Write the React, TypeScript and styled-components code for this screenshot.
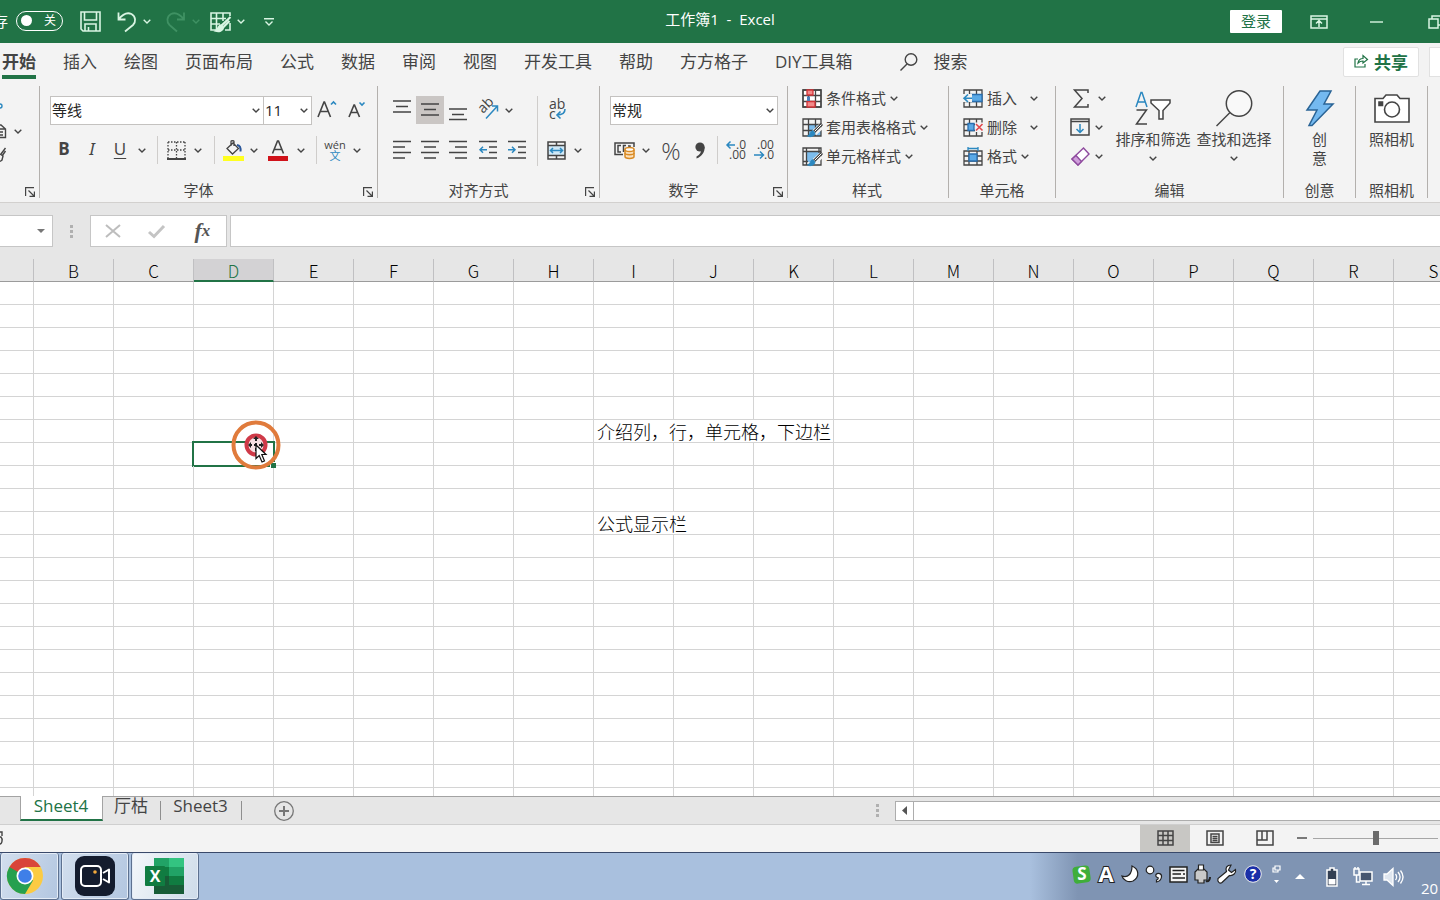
import React from "react";
import styled, { createGlobalStyle } from "styled-components";

const GlobalStyle = createGlobalStyle`
  *, *::before, *::after { box-sizing: border-box; }
  body {
    margin: 0;
    overflow: hidden;
    font-family: "Open Sans", "Noto Sans CJK SC", sans-serif;
    font-size: 15px;
    color: #444;
  }
  button, input, select { font: inherit; color: inherit; }
`;

const green = "#217346";
const ink = "#444";
const blue = "#2b88c0";

const Window = styled.div`
  display: flex;
  flex-direction: column;
  height: 100vh;
  overflow: hidden;
  background: #fff;
`;

/* ---------- shared pieces ---------- */

const BareButton = styled.button`
  display: flex;
  align-items: center;
  justify-content: center;
  flex: none;
  padding: 0;
  border: 0;
  background: none;
`;

const Svg = styled.svg`
  display: block;
  flex: none;
  overflow: visible;
`;

type IconProps = { w: number; h: number; children: React.ReactNode; stroke?: string; sw?: number };
const Icon = ({ w, h, children, stroke = ink, sw = 1.4 }: IconProps) => (
  <Svg width={w} height={h} viewBox={`0 0 ${w} ${h}`} fill="none" stroke={stroke} strokeWidth={sw} aria-hidden="true">
    {children}
  </Svg>
);

const Chevron = ({ color = ink }: { color?: string }) => (
  <Icon w={8} h={5} stroke={color}>
    <path d="M0.7 0.7 4 4 7.3 0.7" />
  </Icon>
);

/* ---------- title bar ---------- */

const TitleBar = styled.header`
  display: grid;
  grid-template-columns: 1fr auto 1fr;
  align-items: center;
  flex: none;
  height: 43px;
  background: ${green};
  color: #fff;
`;

const QuickAccess = styled.div`
  display: flex;
  align-items: center;
`;

const AutoSave = styled.label`
  display: flex;
  justify-content: flex-end;
  width: 8px;
  margin-right: 8px;
  padding-bottom: 2px;
  overflow: hidden;
  line-height: 20px;
`;

const Toggle = styled.button`
  display: flex;
  align-items: center;
  justify-content: space-between;
  width: 47px;
  height: 20px;
  padding: 0 6px 0 4px;
  margin: 0 17px 2px 0;
  border: 1px solid #fff;
  border-radius: 10px;
  background: none;
  font-size: 12px;
  line-height: 16px;
  &::before {
    content: "";
    width: 11px;
    height: 11px;
    border-radius: 50%;
    background: #fff;
  }
`;

const QuickButton = styled(BareButton)<{ $w: number; $gap?: number }>`
  width: ${(p) => p.$w}px;
  height: 28px;
  margin-left: ${(p) => p.$gap || 0}px;
`;

const DocTitle = styled.h1`
  margin: 0;
  padding-bottom: 6px;
  font-size: 15px;
  font-weight: 400;
  white-space: pre;
`;

const WindowActions = styled.div`
  display: flex;
  align-items: center;
  justify-content: flex-end;
`;

const SignIn = styled.button`
  width: 52px;
  height: 23px;
  margin-right: 28px;
  padding: 0 0 2px;
  border: 0;
  border-radius: 1px;
  background: #fff;
  color: ${green};
  font-size: 15px;
  line-height: 20px;
`;

const WindowButton = styled(BareButton)<{ $w: number; $gap?: number }>`
  justify-content: flex-start;
  width: ${(p) => p.$w}px;
  height: 22px;
  margin-right: ${(p) => p.$gap || 0}px;
  overflow: hidden;
`;

const mint = "#d9f5e3";
const faded = "#3f9163";

const TitleArea = () => (
  <TitleBar>
    <QuickAccess>
      <AutoSave htmlFor="autosave">存</AutoSave>
      <Toggle id="autosave" type="button">关</Toggle>
      <QuickButton $w={21} aria-label="保存">
        <Icon w={21} h={21} stroke={mint} sw={1.6}>
          <path d="M1 1H20V20H3L1 18Z" />
          <path d="M4.500 1V9H16.500V1M5 20V13H16V20M8.500 20V16" />
        </Icon>
      </QuickButton>
      <QuickButton $w={20} $gap={16} aria-label="撤消">
        <Icon w={20} h={20} stroke={mint} sw={1.8}>
          <path d="M1.500 0.500V7.500H8.500M1.500 7.500C5 3 10 0 14.500 2C19 4.500 19 10 16 13L8 19.500" />
        </Icon>
      </QuickButton>
      <QuickButton $w={8} $gap={6} aria-label="撤消选项"><Chevron color={mint} /></QuickButton>
      <QuickButton $w={20} $gap={15} aria-label="恢复">
        <Icon w={20} h={20} stroke={faded} sw={1.8}>
          <path d="M18 0.500V7.500H11M18 7.500C14.500 3 9.500 0 5 2C0.500 4.500 0.500 10 3.500 13L11 19.500" />
        </Icon>
      </QuickButton>
      <QuickButton $w={8} $gap={6} aria-label="恢复选项"><Chevron color={faded} /></QuickButton>
      <QuickButton $w={21} $gap={10} aria-label="套用格式">
        <Icon w={21} h={20} stroke={mint} sw={1.6}>
          <path d="M7 18H1V1H20V4M1 6.500H16M1 12H10M6.500 1V18M13 1V9M20 11V18H15" />
          <path d="M20.500 5 11 14M19.500 9 13.500 15" strokeWidth={2.2} />
          <path d="M11 13C8 13 9 17 5.500 19C9 20 13 19 13.500 15.500Z" fill={mint} />
        </Icon>
      </QuickButton>
      <QuickButton $w={8} $gap={6} aria-label="格式选项"><Chevron color={mint} /></QuickButton>
      <QuickButton $w={10} $gap={19} aria-label="自定义快速访问工具栏">
        <Icon w={10} h={8} stroke={mint}>
          <path d="M0 0.700H10M1.500 3.500 5 7 8.500 3.500" />
        </Icon>
      </QuickButton>
    </QuickAccess>
    <DocTitle>工作簿1  -  Excel</DocTitle>
    <WindowActions>
      <SignIn type="button">登录</SignIn>
      <WindowButton $w={18} $gap={42} aria-label="功能区显示选项">
        <Icon w={18} h={14} stroke={mint} sw={1.5}>
          <path d="M1 1H17V13H1ZM1 4H17M9 12V6M6 8.500 9 5.500 12 8.500" />
        </Icon>
      </WindowButton>
      <WindowButton $w={14} $gap={44} aria-label="最小化">
        <Icon w={14} h={2} stroke={mint}><path d="M0 1H13" /></Icon>
      </WindowButton>
      <WindowButton $w={12} aria-label="还原">
        <Icon w={14} h={14} stroke={mint} sw={1.5}>
          <path d="M1 4H10V13H1ZM4 4V1H13V10H10" />
        </Icon>
      </WindowButton>
    </WindowActions>
  </TitleBar>
);

/* ---------- ribbon tabs ---------- */

const TabBar = styled.nav`
  display: flex;
  align-items: center;
  flex: none;
  gap: 27px;
  height: 40px;
  padding-left: 2px;
  background: #f3f3f3;
  font-size: 17px;
  overflow: hidden;
`;

const Tab = styled.button<{ $active?: boolean }>`
  flex: none;
  height: 33px;
  margin-bottom: 2px;
  padding: 4px 0 0;
  border: 0;
  border-bottom: 4px solid ${(p) => (p.$active ? green : "transparent")};
  background: none;
  font-weight: ${(p) => (p.$active ? 700 : 400)};
  line-height: 24px;
`;

const SearchBox = styled.button`
  display: flex;
  align-items: center;
  gap: 16px;
  margin-left: 20px;
  padding: 0 0 3px;
  border: 0;
  background: none;
  line-height: 24px;
`;

const TabActions = styled.div`
  display: flex;
  gap: 10px;
  margin: 0 0 2px auto;
`;

const Share = styled.button`
  display: flex;
  align-items: center;
  justify-content: center;
  gap: 6px;
  width: 76px;
  height: 30px;
  padding: 0 0 2px;
  border: 1px solid #e1e1e1;
  border-radius: 2px;
  background: #fff;
  color: ${green};
  font-weight: 700;
`;

const Comments = styled.button`
  width: 11px;
  height: 30px;
  padding: 0;
  border: 1px solid #e1e1e1;
  border-right: 0;
  background: #fff;
`;

const tabs = ["插入", "绘图", "页面布局", "公式", "数据", "审阅", "视图", "开发工具", "帮助", "方方格子", "DIY工具箱"];

const Tabs = () => (
  <TabBar>
    <Tab $active>开始</Tab>
    {tabs.map((t) => <Tab key={t}>{t}</Tab>)}
    <SearchBox type="button">
      <Icon w={18} h={18}>
        <circle cx="11" cy="6.500" r="5.800" />
        <path d="M7 11 0.500 17.500" />
      </Icon>
      搜索
    </SearchBox>
    <TabActions>
      <Share type="button">
        <Icon w={14} h={14} stroke={green} sw={1.2}>
          <path d="M4 5H1V13H11V10M4 9C4.500 6 6 4.500 9 4.500V1.500L13.500 5.500 9 9V7C7 7 5.500 7.500 4 9Z" />
        </Icon>
        共享
      </Share>
      <Comments type="button" aria-label="批注" />
    </TabActions>
  </TabBar>
);

/* ---------- ribbon ---------- */

const RibbonBar = styled.section`
  display: flex;
  flex: none;
  height: 120px;
  padding: 3px 0 4px;
  border-bottom: 1px solid #d2d0ce;
  background: #f3f3f3;
  overflow: hidden;
`;

const Group = styled.div<{ $w: number }>`
  position: relative;
  display: flex;
  flex-direction: column;
  flex: none;
  width: ${(p) => p.$w}px;
  border-right: 1px solid #b3b0ad;
`;

const GroupBody = styled.div<{ $x?: number; $y?: number; $center?: boolean }>`
  display: flex;
  justify-content: ${(p) => (p.$center ? "center" : "flex-start")};
  padding: ${(p) => p.$y || 0}px 0 0 ${(p) => p.$x || 0}px;
`;

const GroupLabel = styled.div<{ $shift?: number }>`
  margin-top: auto;
  padding-right: ${(p) => p.$shift || 0}px;
  height: 16px;
  line-height: 16px;
  text-align: center;
`;

const LauncherButton = styled(BareButton)`
  position: absolute;
  right: 4px;
  bottom: 0;
  width: 10px;
  height: 12px;
`;

const Launcher = () => (
  <LauncherButton aria-label="更多选项">
    <Icon w={10} h={10} sw={1.2}>
      <path d="M0.600 9V0.600H9M3.500 3.500 9 9M9.400 4.500V9.400H4.500" />
    </Icon>
  </LauncherButton>
);

const Stack = styled.div<{ $gap: number }>`
  display: flex;
  flex-direction: column;
  gap: ${(p) => p.$gap}px;
`;

const Row = styled.div<{ $h?: number }>`
  display: flex;
  align-items: center;
  height: ${(p) => p.$h || 28}px;
`;

const Tool = styled(BareButton)<{ $w: number; $active?: boolean }>`
  width: ${(p) => p.$w}px;
  height: 28px;
  background: ${(p) => (p.$active ? "#cac6c4" : "none")};
`;

const LetterTool = styled(Tool)<{ $bold?: boolean; $italic?: boolean; $under?: boolean }>`
  padding-bottom: 3px;
  font-family: ${(p) => (p.$italic ? '"Noto Sans", serif' : "inherit")};
  font-size: 17px;
  font-weight: ${(p) => (p.$bold ? 700 : 400)};
  font-style: ${(p) => (p.$italic ? "italic" : "normal")};
  text-decoration: ${(p) => (p.$under ? "underline" : "none")};
  text-underline-offset: 3px;
`;

const Divider = styled.div<{ $w: number; $h?: number }>`
  flex: none;
  width: ${(p) => p.$w}px;
  height: ${(p) => p.$h || 28}px;
  background: linear-gradient(#cfcdcb, #cfcdcb) center / 1px 100% no-repeat;
`;

const PickerBox = styled.div<{ $w: number }>`
  position: relative;
  flex: none;
  width: ${(p) => p.$w}px;
  margin-right: -1px;
`;

const PickerSelect = styled.select`
  display: block;
  width: 100%;
  height: 29px;
  padding: 0 18px 0 1px;
  border: 1px solid #c4c2c0;
  border-radius: 0;
  background: #fff;
  color: #262626;
  appearance: none;
`;

const PickerArrow = styled.span`
  position: absolute;
  top: 12px;
  right: 4px;
  pointer-events: none;
`;

const Picker = ({ value, label, w }: { value: string; label: string; w: number }) => (
  <PickerBox $w={w}>
    <PickerSelect aria-label={label} defaultValue={value}>
      <option>{value}</option>
    </PickerSelect>
    <PickerArrow><Chevron /></PickerArrow>
  </PickerBox>
);

const Drop = ({ w, label }: { w: number; label: string }) => (
  <Tool $w={w} aria-label={label}><Chevron /></Tool>
);

const ClipGroup = () => (
  <Group $w={40}>
    <GroupBody $y={9}>
      <Stack $gap={0}>
        <Row $h={24}>
          <Icon w={3} h={8} stroke={blue}><circle cx="0" cy="3" r="2" /></Icon>
        </Row>
        <Row $h={24}>
          <Icon w={6} h={16}><path d="M0 2H1L5.500 6V14.500H0M0 6H5M0 9H3M0 12H3" /></Icon>
          <Drop w={24} label="复制选项" />
        </Row>
        <Row $h={24}>
          <Icon w={6} h={16}><path d="M5.500 1 1 7M5.500 4 2 9M0 7 3 9 2 13 0 14.500" /></Icon>
        </Row>
      </Stack>
    </GroupBody>
    <Launcher />
  </Group>
);

const Pinyin = styled.span`
  display: flex;
  flex-direction: column;
  align-items: center;
  font-size: 11px;
  line-height: 11px;
  span { color: ${blue}; }
`;

const FontGroup = () => (
  <Group $w={338}>
    <GroupBody $x={10} $y={10}>
      <Stack $gap={12}>
        <Row>
          <Picker value="等线" label="字体" w={214} />
          <Picker value="11" label="字号" w={49} />
          <Tool $w={32} aria-label="增大字号">
            <Icon w={20} h={20} sw={1.6}>
              <path d="M1 17 7 2H7.500L13.500 17M3 11.500H11.500" />
              <path d="M14 4.500 16.500 2 19 4.500" stroke={blue} />
            </Icon>
          </Tool>
          <Tool $w={28} aria-label="减小字号">
            <Icon w={18} h={18} sw={1.6}>
              <path d="M1 16 6 4H6.500L11.500 16M3 11.500H9.500" />
              <path d="M11.500 1.500 14 4 16.500 1.500" stroke={blue} />
            </Icon>
          </Tool>
        </Row>
        <Row>
          <LetterTool $w={28} $bold>B</LetterTool>
          <LetterTool $w={28} $italic>I</LetterTool>
          <LetterTool $w={28} $under>U</LetterTool>
          <Drop w={16} label="下划线选项" />
          <Divider $w={15} />
          <Tool $w={22} aria-label="边框">
            <Icon w={19} h={19} sw={1.3}>
              <path d="M1 1H18M1 1V17M18 1V17M9.500 1V17M1 9H18" strokeDasharray="1.500 1.500" />
              <path d="M0 18H19" strokeWidth={2} />
            </Icon>
          </Tool>
          <Drop w={22} label="边框选项" />
          <Divider $w={10} />
          <Tool $w={28} aria-label="填充颜色">
            <Icon w={21} h={21} sw={1.3}>
              <path d="M4 8.500 10 3 15.500 8.500 9.500 14ZM8 6V1.500C8 0.500 11 0.500 11 1.500V6" />
              <path d="M14 5C17 5.500 18 7.500 17.500 11.500" stroke="#2b579a" strokeWidth={2} />
              <path d="M0 18.500H21" stroke="#ffff20" strokeWidth={5} />
            </Icon>
          </Tool>
          <Drop w={14} label="填充选项" />
          <Tool $w={34} aria-label="字体颜色">
            <Icon w={20} h={21} sw={1.6}>
              <path d="M4.500 13.500 9.500 1H10.500L15.500 13.500M6.500 9.500H13.500" />
              <path d="M0 18.500H20" stroke="#d0121a" strokeWidth={5} />
            </Icon>
          </Tool>
          <Drop w={12} label="字体颜色选项" />
          <Divider $w={18} />
          <Tool $w={20} aria-label="拼音">
            <Pinyin>wén<span>文</span></Pinyin>
          </Tool>
          <Drop w={24} label="拼音选项" />
        </Row>
      </Stack>
    </GroupBody>
    <GroupLabel $shift={20}>字体</GroupLabel>
    <Launcher />
  </Group>
);

const Lines = ({ d }: { d: string }) => <Icon w={18} h={20} sw={1.5}><path d={d} /></Icon>;

const IconText = styled.text<{ $size: number }>`
  font-size: ${(p) => p.$size}px;
  fill: ${ink};
  stroke: none;
`;

const AlignGroup = () => (
  <Group $w={222}>
    <GroupBody $x={10} $y={10}>
      <Stack $gap={12}>
        <Row>
          <Tool $w={28} aria-label="顶端对齐"><Lines d="M0 1H18M3 6.500H15M0 12H18" /></Tool>
          <Tool $w={28} $active aria-label="垂直居中"><Lines d="M0 4H18M3 9.500H15M0 15H18" /></Tool>
          <Tool $w={28} aria-label="底端对齐"><Lines d="M0 9H18M3 14.500H15M0 19.500H18" /></Tool>
          <Tool $w={32} aria-label="方向">
            <Icon w={20} h={20} stroke={blue} sw={1.5}>
              <IconText $size={14} transform="translate(5 14) rotate(-45)">ab</IconText>
              <path d="M8 18.500 19.500 6M14 6H19.500V11.500" />
            </Icon>
          </Tool>
          <Drop w={10} label="方向选项" />
        </Row>
        <Row>
          <Tool $w={28} aria-label="左对齐"><Lines d="M0 1.500H18M0 7H12M0 12.500H18M0 18H12" /></Tool>
          <Tool $w={28} aria-label="居中"><Lines d="M0 1.500H18M3 7H15M0 12.500H18M3 18H15" /></Tool>
          <Tool $w={28} aria-label="右对齐"><Lines d="M0 1.500H18M6 7H18M0 12.500H18M6 18H18" /></Tool>
          <Tool $w={32} aria-label="减少缩进">
            <Icon w={18} h={20} sw={1.5}>
              <path d="M0 1.500H18M10 7H18M10 12.500H18M0 18H18" />
              <path d="M8 9.800H1M4 6.800 1 9.800 4 12.800" stroke={blue} />
            </Icon>
          </Tool>
          <Tool $w={26} aria-label="增加缩进">
            <Icon w={18} h={20} sw={1.5}>
              <path d="M0 1.500H18M10 7H18M10 12.500H18M0 18H18" />
              <path d="M0 9.800H7M4 6.800 7 9.800 4 12.800" stroke={blue} />
            </Icon>
          </Tool>
        </Row>
      </Stack>
      <Divider $w={14} $h={70} />
      <Stack $gap={12}>
        <Row>
          <Tool $w={26} aria-label="自动换行">
            <Icon w={18} h={20} stroke={blue} sw={1.6}>
              <IconText $size={14} x="1" y="9">ab</IconText>
              <IconText $size={14} x="1" y="19">c</IconText>
              <path d="M17 9C17 13 15 15 9 15M12.500 11.500 9 15 12.500 18.500" />
            </Icon>
          </Tool>
        </Row>
        <Row>
          <Tool $w={24} aria-label="合并后居中">
            <Icon w={19} h={19} sw={1.5}>
              <path d="M1 4.500H18V14.500H1Z" stroke="none" fill="#cfe8f7" />
              <path d="M1 1H18V18H1ZM1 4.500H18M1 14.500H18M9.500 1V4.500M9.500 14.500V18" />
              <path d="M3.500 9.500H15.500M6 7 3.500 9.500 6 12M13 7 15.500 9.500 13 12" stroke={blue} />
            </Icon>
          </Tool>
          <Drop w={20} label="合并选项" />
        </Row>
      </Stack>
    </GroupBody>
    <GroupLabel $shift={20}>对齐方式</GroupLabel>
    <Launcher />
  </Group>
);

const Percent = styled(Tool)`
  font-size: 24px;
  font-weight: 300;
`;

const NumberGroup = () => (
  <Group $w={188}>
    <GroupBody $x={10} $y={10}>
      <Stack $gap={12}>
        <Row><Picker value="常规" label="数字格式" w={168} /></Row>
        <Row>
          <Tool $w={28} aria-label="会计数字格式">
            <Icon w={21} h={18} sw={1.5}>
              <path d="M9 13.500H1V2H20V6M7 4.500H4V11H7M12 4.500H9.500V11M14 5H16V7" />
              <path d="M11 8.500V15.500C11 18 20 18 20 15.500V8.500" fill="#fbe0bb" stroke="#d98a24" />
              <ellipse cx="15.500" cy="8.500" rx="4.500" ry="2" fill="#fff" stroke="#d98a24" />
              <path d="M11 12C11 14.200 20 14.200 20 12" stroke="#d98a24" />
            </Icon>
          </Tool>
          <Drop w={16} label="货币选项" />
          <Percent $w={34}>%</Percent>
          <Tool $w={24} aria-label="千位分隔样式">
            <Icon w={10} h={17} stroke="none">
              <circle cx="5" cy="5" r="4.600" fill={ink} />
              <path d="M9.600 4.500C10 10 7 14.500 1.500 16.500V14.500C5 13 6.500 10 6 7Z" fill={ink} />
            </Icon>
          </Tool>
          <Divider $w={10} />
          <Tool $w={28} aria-label="增加小数位数">
            <Icon w={20} h={20} stroke={blue} sw={1.5}>
              <IconText $size={12} x="10" y="9">.0</IconText>
              <IconText $size={12} x="3" y="19">.00</IconText>
              <path d="M9 5H1M4.500 1.500 1 5 4.500 8.500" />
            </Icon>
          </Tool>
          <Tool $w={28} aria-label="减少小数位数">
            <Icon w={20} h={20} stroke={blue} sw={1.5}>
              <IconText $size={12} x="3" y="9">.00</IconText>
              <IconText $size={12} x="10" y="19">.0</IconText>
              <path d="M0 15H9M6 11.500 9.500 15 6 18.500" />
            </Icon>
          </Tool>
        </Row>
      </Stack>
    </GroupBody>
    <GroupLabel $shift={20}>数字</GroupLabel>
    <Launcher />
  </Group>
);

const TextTool = styled.button<{ $gap?: number }>`
  display: flex;
  align-items: center;
  height: 24px;
  padding: 0;
  border: 0;
  background: none;
  line-height: 20px;
  white-space: nowrap;
  span { margin: 0 ${(p) => p.$gap || 4}px 0 4px; padding-bottom: 1px; }
`;

const sheetLines = "M1 1H19V18H1ZM1 6.500H19M1 12.500H19M6.500 1V18M13.500 1V18";

const Brush = () => (
  <>
    <path d="M19 8.500 12 15" stroke="#f3f3f3" strokeWidth={6} />
    <path d="M20 6 12 14" stroke={ink} strokeWidth={3} />
    <path d="M19.500 6.500 12.500 13.500" stroke="#fff" strokeWidth={1} />
    <path d="M11 12.500C8 13 9 16.500 5.500 18C8 19.500 13 18.500 13 15Z" fill={blue} stroke={blue} strokeWidth={0.8} />
  </>
);

const StyleGroup = () => (
  <Group $w={161}>
    <GroupBody $x={14}>
      <Stack $gap={5}>
        <TextTool>
          <Icon w={20} h={19} sw={1.3}>
            <path d="M1 1H19V18H1Z" fill="#fff" />
            <path d={sheetLines} />
            <path d="M5 1H11V6H5ZM5 12.500H13V18H5Z" fill="#f28a8a" stroke="#d13438" />
            <path d="M5 7.500H8V12H5Z" fill="#4a7ebb" stroke="none" />
          </Icon>
          <span>条件格式</span><Chevron />
        </TextTool>
        <TextTool>
          <Icon w={20} h={19} sw={1.3}>
            <path d="M7 6.500H19V18H7Z" fill="#7cbcec" stroke="none" />
            <path d={sheetLines} />
            <Brush />
          </Icon>
          <span>套用表格格式</span><Chevron />
        </TextTool>
        <TextTool>
          <Icon w={20} h={19} sw={1.3}>
            <path d="M4.500 4.500H17V15H4.500Z" fill="#7cbcec" stroke="none" />
            <path d="M1 1H19V18H1ZM1 4.500H19M4.500 1V18M17 1V6M1 14.500H6" />
            <Brush />
          </Icon>
          <span>单元格样式</span><Chevron />
        </TextTool>
      </Stack>
    </GroupBody>
    <GroupLabel $shift={2}>样式</GroupLabel>
  </Group>
);

const CellGroup = () => (
  <Group $w={107}>
    <GroupBody $x={14}>
      <Stack $gap={5}>
        <TextTool $gap={13}>
          <Icon w={20} h={19} sw={1.3}>
            <path d={sheetLines} />
            <path d="M8 5.500H19V12.500H8Z" fill="#5aa9e6" stroke="#2a6fb0" />
            <path d="M0 5H9V13H0Z" fill="#f3f3f3" stroke="none" />
            <path d="M9 9.200H1M5 5.500 1 9.200 5 13" stroke={blue} strokeWidth={1.6} />
          </Icon>
          <span>插入</span><Chevron />
        </TextTool>
        <TextTool $gap={13}>
          <Icon w={20} h={19} sw={1.3}>
            <path d={sheetLines} />
            <path d="M5 5.500H11V12.500H5Z" fill="#5aa9e6" stroke="#2a6fb0" />
            <path d="M12 4.500H20V14H12Z" fill="#f3f3f3" stroke="none" />
            <path d="M13 6 19.500 12.500M19.500 6 13 12.500" stroke="#e0484d" strokeWidth={1.6} />
          </Icon>
          <span>删除</span><Chevron />
        </TextTool>
        <TextTool>
          <Icon w={20} h={19} sw={1.3}>
            <path d="M1 4H19V18H1ZM1 9H19M1 14H19M6 4V18M14 4V18" />
            <path d="M6 7H14V14H6Z" fill="#5aa9e6" stroke="#2a6fb0" />
            <path d="M5 1.500H15M5 0V4M15 0V4" stroke={blue} />
          </Icon>
          <span>格式</span><Chevron />
        </TextTool>
      </Stack>
    </GroupBody>
    <GroupLabel>单元格</GroupLabel>
  </Group>
);

const EditRow = styled.div`
  display: flex;
  align-items: center;
  width: 44px;
  height: 24px;
`;

const BigTool = styled.button<{ $w: number }>`
  display: flex;
  flex-direction: column;
  align-items: center;
  width: ${(p) => p.$w}px;
  padding: 4px 0 0;
  border: 0;
  background: none;
  line-height: 19px;
  white-space: nowrap;
`;

const BigIcon = styled.span`
  display: flex;
  align-items: center;
  justify-content: center;
  height: 36px;
  margin-bottom: 4px;
`;

const BigDrop = styled.span`
  display: flex;
  align-items: center;
  height: 19px;
`;

const EditGroup = () => (
  <Group $w={228}>
    <GroupBody $x={12}>
      <Stack $gap={5}>
        <EditRow>
          <Tool $w={26} aria-label="自动求和">
            <Icon w={16} h={19} sw={1.5}><path d="M15 4V1H1.500L9 9.500 1.500 18H15V15" /></Icon>
          </Tool>
          <Drop w={16} label="求和选项" />
        </EditRow>
        <EditRow>
          <Tool $w={24} aria-label="填充">
            <Icon w={20} h={18} sw={1.5}>
              <path d="M1 1H19V17H1ZM1 3.500H19" />
              <path d="M10 6V14.500M6.500 11 10 14.500 13.500 11" stroke={blue} />
            </Icon>
          </Tool>
          <Drop w={14} label="填充选项" />
        </EditRow>
        <EditRow>
          <Tool $w={24} aria-label="清除">
            <Icon w={19} h={19} stroke="#8e4a9e">
              <path d="M12.500 1 18 7 7 18 1 12Z" fill="#fff" />
              <path d="M5 8.500 10.500 14.500 7 18 1 12Z" fill="#cf9fdb" />
            </Icon>
          </Tool>
          <Drop w={14} label="清除选项" />
        </EditRow>
      </Stack>
      <BigTool $w={82}>
        <BigIcon>
          <Icon w={36} h={36} sw={1.5}>
            <path d="M1 17 6 2.500H7L12 17M3 12H10" stroke={blue} />
            <path d="M1.500 20H11.500L1.500 34H12" />
            <path d="M16 10H35V13L28 20.500V29H24V20.500L16 13Z" fill="#fff" />
          </Icon>
        </BigIcon>
        排序和筛选
        <BigDrop><Chevron /></BigDrop>
      </BigTool>
      <BigTool $w={80}>
        <BigIcon>
          <Icon w={36} h={36} sw={1.5}>
            <circle cx="23" cy="13.500" r="12.700" fill="#f9f9f9" />
            <path d="M14 22.500 0.500 36" />
          </Icon>
        </BigIcon>
        查找和选择
        <BigDrop><Chevron /></BigDrop>
      </BigTool>
    </GroupBody>
    <GroupLabel>编辑</GroupLabel>
  </Group>
);

const IdeaGroup = () => (
  <Group $w={72}>
    <GroupBody $center>
      <BigTool $w={60}>
        <BigIcon>
          <Icon w={28} h={36} stroke="#2a6496" sw={1.5}>
            <path d="M14 1H25L18 14H27L6 35.500H3L11 20H1Z" fill="#74b9f0" />
          </Icon>
        </BigIcon>
        创<br />意
      </BigTool>
    </GroupBody>
    <GroupLabel>创意</GroupLabel>
  </Group>
);

const CameraGroup = () => (
  <Group $w={72}>
    <GroupBody $center>
      <BigTool $w={60}>
        <BigIcon>
          <Icon w={36} h={29} sw={1.6}>
            <path d="M1 4.500H9L12 1H23L26 4.500H35V28H1Z" fill="#fff" />
            <circle cx="18" cy="15.500" r="7.500" />
            <path d="M5 8H8.500V11.500H5Z" fill={ink} />
          </Icon>
        </BigIcon>
        照相机
      </BigTool>
    </GroupBody>
    <GroupLabel>照相机</GroupLabel>
  </Group>
);

/* ---------- formula bar ---------- */

const FormulaBar = styled.section`
  display: flex;
  align-items: center;
  flex: none;
  height: 56px;
  background: #e6e6e6;
`;

const NameBox = styled.div`
  display: flex;
  align-items: center;
  justify-content: flex-end;
  width: 53px;
  height: 32px;
  padding-right: 7px;
  border: 1px solid #c6c6c6;
  border-left: 0;
  background: #fff;
`;

const Grip = styled.div<{ $w: number }>`
  display: flex;
  justify-content: center;
  width: ${(p) => p.$w}px;
`;

const Dots = () => (
  <Icon w={3} h={13} stroke="none">
    <path d="M0 0H3V3H0ZM0 5H3V8H0ZM0 10H3V13H0Z" fill="#b0b0b0" />
  </Icon>
);

const FormulaTools = styled.div`
  display: flex;
  align-items: center;
  justify-content: space-around;
  width: 137px;
  height: 32px;
  margin-right: 3px;
  border: 1px solid #c6c6c6;
  background: #fff;
`;

const FxButton = styled(BareButton)`
  width: 20px;
  color: #555;
  font-family: "Liberation Serif", serif;
  font-size: 22px;
  font-style: italic;
  font-weight: 700;
  line-height: 24px;
  small { font-size: 17px; }
`;

const FormulaInput = styled.input`
  flex: 1;
  min-width: 0;
  height: 32px;
  border: 1px solid #c6c6c6;
  border-right: 0;
  border-radius: 0;
  background: #fff;
`;

const Formula = () => (
  <FormulaBar>
    <NameBox>
      <Icon w={8} h={4} stroke="none"><path d="M0 0H8L4 4Z" fill="#777" /></Icon>
    </NameBox>
    <Grip $w={37}><Dots /></Grip>
    <FormulaTools>
      <BareButton aria-label="取消">
        <Icon w={16} h={14} stroke="#bdbdbd" sw={2}><path d="M1 1 15 13M15 1 1 13" /></Icon>
      </BareButton>
      <BareButton aria-label="输入">
        <Icon w={17} h={13} stroke="#c4c4c4" sw={3}><path d="M1 7 6 11.500 16 1" /></Icon>
      </BareButton>
      <FxButton>f<small>x</small></FxButton>
    </FormulaTools>
    <FormulaInput aria-label="编辑栏" />
  </FormulaBar>
);

/* ---------- worksheet ---------- */

const SheetArea = styled.main`
  flex: 1;
  min-height: 0;
  overflow: hidden;
  background: #fff;
`;

const Grid = styled.table`
  width: 1474px;
  table-layout: fixed;
  border-collapse: separate;
  border-spacing: 0;
`;

const HeadCell = styled.th<{ $on?: boolean }>`
  height: 23px;
  padding: 2px 0 0;
  border-right: 1px solid #c0c0c2;
  border-bottom: ${(p) => (p.$on ? `2px solid ${green}` : "1px solid #9b9b9b")};
  background: ${(p) => (p.$on ? "#d3d2d4" : "#e6e6e6")};
  color: ${(p) => (p.$on ? green : "#000")};
  font-family: "Noto Sans CJK SC", sans-serif;
  font-size: 17px;
  font-weight: 300;
  line-height: 18px;
`;

const Cell = styled.td`
  position: relative;
  height: 23px;
  padding: 0 0 0 3px;
  border-right: 1px solid #d4d4d4;
  border-bottom: 1px solid #d4d4d4;
  color: #000;
  font-family: "Noto Sans CJK SC", sans-serif;
  font-size: 18px;
  font-weight: 300;
  line-height: 22px;
  white-space: nowrap;
`;

const Selection = styled.div`
  position: absolute;
  inset: -2px;
  border: 2px solid ${green};
`;

const FillHandle = styled.div`
  position: absolute;
  right: -3px;
  bottom: -3px;
  z-index: 1;
  width: 6px;
  height: 6px;
  border: 1px solid #fff;
  border-width: 1px 0 0 1px;
  background: ${green};
`;

const Pointer = styled.div`
  position: absolute;
  left: 37px;
  top: -23px;
  z-index: 1;
`;

const letters = "BCDEFGHIJKLMNOPQRS".split("");
const notes: Record<number, { text: string; span: number }> = {
  6: { text: "介绍列，行，单元格，下边栏", span: 3 },
  10: { text: "公式显示栏", span: 2 },
};

const ActiveCell = () => (
  <Cell>
    <Selection />
    <FillHandle />
    <Pointer>
      <Icon w={50} h={50}>
        <circle cx="25" cy="25" r="22.500" stroke="#e07b3c" strokeWidth={4} />
        <circle cx="25" cy="25" r="9.500" stroke="#cf3a48" strokeWidth={4} fill="#f7dfe2" />
        <path d="M25 18V32M18 25H32" stroke="#222" strokeWidth={2} strokeDasharray="3 2" />
        <path d="M17 25 20 22V28ZM33 25 30 22V28ZM25 16 22 19H28Z" fill="#222" stroke="none" />
        <path d="M25 25V38.500L28.200 35.500 31 42 33.500 41 30.800 34.500H35Z" fill="#fff" stroke="#111" strokeWidth={1.2} />
      </Icon>
    </Pointer>
  </Cell>
);

const Sheet = () => (
  <SheetArea>
    <Grid>
      <colgroup>
        <col width="34" />
        {letters.map((l) => <col key={l} width="80" />)}
      </colgroup>
      <thead>
        <tr>
          <HeadCell />
          {letters.map((l) => <HeadCell key={l} scope="col" $on={l === "D"}>{l}</HeadCell>)}
        </tr>
      </thead>
      <tbody>
        {Array.from({ length: 23 }, (_, r) => {
          const note = notes[r];
          return (
            <tr key={r}>
              <Cell />
              {letters.map((l, c) => {
                if (note && c > 7 && c < 7 + note.span) return null;
                if (note && c === 7) return <Cell key={l} colSpan={note.span}>{note.text}</Cell>;
                if (r === 7 && l === "D") return <ActiveCell key={l} />;
                return <Cell key={l} />;
              })}
            </tr>
          );
        })}
      </tbody>
    </Grid>
  </SheetArea>
);

/* ---------- sheet tabs and status bar ---------- */

const SheetBar = styled.section`
  display: flex;
  flex: none;
  height: 29px;
  border-top: 1px solid #a3a3a3;
  border-bottom: 1px solid #cfcfcf;
  background: #e6e6e6;
`;

const SheetTabs = styled.div`
  display: flex;
  align-items: flex-start;
  padding-left: 20px;
  font-size: 17px;
`;

const ActiveSheet = styled.button`
  width: 83px;
  height: 25px;
  margin-top: -1px;
  padding: 0 1px 4px 0;
  border: 1px solid #a3a3a3;
  border-width: 0 1px 2px;
  border-bottom-color: ${green};
  background: #fff;
  color: ${green};
  line-height: 19px;
`;

const SheetTab = styled.button<{ $w: number }>`
  width: ${(p) => p.$w}px;
  height: 19px;
  padding: 0 1px 2px 0;
  border: 0;
  background: none;
  line-height: 17px;
`;

const SheetSplit = styled.span`
  width: 1px;
  height: 19px;
  margin-top: 4px;
  background: #8f8f8f;
`;

const AddSheet = styled(BareButton)`
  margin: 4px 0 0 32px;
`;

const ScrollArea = styled.div`
  display: flex;
  align-items: center;
  gap: 5px;
  width: 40%;
  margin-left: auto;
`;

const ScrollTrack = styled.div`
  display: flex;
  flex: 1;
  height: 20px;
  border: 1px solid #adadad;
  border-right: 0;
  background: #fff;
`;

const ScrollLeft = styled(BareButton)`
  width: 18px;
  border-right: 1px solid #adadad;
`;

const SheetStrip = () => (
  <SheetBar>
    <SheetTabs>
      <ActiveSheet>Sheet4</ActiveSheet>
      <SheetTab $w={57}>厅枯</SheetTab>
      <SheetSplit />
      <SheetTab $w={80}>Sheet3</SheetTab>
      <SheetSplit />
      <AddSheet aria-label="新工作表">
        <Icon w={20} h={20} stroke="#777" sw={1.3}>
          <circle cx="10" cy="10" r="9.300" />
          <path d="M5 10H15M10 5V15" strokeWidth={2} />
        </Icon>
      </AddSheet>
    </SheetTabs>
    <ScrollArea>
      <Grip $w={26}><Dots /></Grip>
      <ScrollTrack>
        <ScrollLeft aria-label="向左滚动">
          <Icon w={5} h={9} stroke="none"><path d="M5 0V9L0 4.500Z" fill="#555" /></Icon>
        </ScrollLeft>
      </ScrollTrack>
    </ScrollArea>
  </SheetBar>
);

const StatusBar = styled.footer`
  display: flex;
  align-items: center;
  flex: none;
  height: 27px;
  padding-bottom: 1px;
  background: #f3f3f3;
`;

const ViewButtons = styled.div`
  display: flex;
  margin-left: auto;
`;

const ViewButton = styled(BareButton)<{ $on?: boolean }>`
  width: 50px;
  height: 27px;
  background: ${(p) => (p.$on ? "#c8c7c4" : "none")};
`;

const ZoomOut = styled(BareButton)`
  width: 23px;
  height: 27px;
`;

const ZoomSlider = styled.input`
  width: 125px;
  height: 16px;
  margin: 0 2px 0 0;
  appearance: none;
  background: linear-gradient(#a6a6a6, #a6a6a6) center / 100% 1px no-repeat;
  &::-webkit-slider-thumb {
    appearance: none;
    width: 6px;
    height: 14px;
    background: #6b6b6b;
  }
`;

const Status = () => (
  <StatusBar>
    <Icon w={3} h={14}><path d="M0 1H2V5M0 6H1C3 8 2 13 0 13" /></Icon>
    <ViewButtons>
      <ViewButton $on aria-label="普通">
        <Icon w={17} h={16} sw={1.5}><path d="M1 1H16V15H1ZM1 5.500H16M1 10.500H16M6 1V15M11 1V15" /></Icon>
      </ViewButton>
      <ViewButton aria-label="页面布局">
        <Icon w={18} h={16} sw={1.5}><path d="M1 1H17V15H1ZM5 4H13V12.500H5ZM6.500 6.500H11.500M6.500 8.500H11.500M6.500 10.500H11.500" /></Icon>
      </ViewButton>
      <ViewButton aria-label="分页预览">
        <Icon w={18} h={16} sw={1.5}><path d="M1 1H17V15H1ZM1 10H11V1M6 1V10" /></Icon>
      </ViewButton>
    </ViewButtons>
    <ZoomOut aria-label="缩小">
      <Icon w={10} h={2}><path d="M0 1H10" /></Icon>
    </ZoomOut>
    <ZoomSlider type="range" aria-label="显示比例" defaultValue={50} />
  </StatusBar>
);

/* ---------- taskbar ---------- */

const TaskBar = styled.footer`
  display: flex;
  flex: none;
  height: 48px;
  border-top: 1px solid #39496a;
  background: #a9c0de;
`;

const TaskButton = styled(BareButton)<{ $w: number; $gap?: number; $active?: boolean }>`
  width: ${(p) => p.$w}px;
  height: 47px;
  margin-right: ${(p) => p.$gap || 0}px;
  border: 1px solid #5d7190;
  border-top: 0;
  border-radius: 3px;
  box-shadow: inset 0 0 0 1px #e4ecf6;
  background: ${(p) => (p.$active ? "linear-gradient(110deg, #f4f7fa, #cddbe9)" : "linear-gradient(110deg, #d3dfee, #b2c6e0)")};
`;

const Tray = styled.div`
  display: flex;
  align-items: center;
  justify-content: flex-end;
  width: 410px;
  margin-left: auto;
  background: linear-gradient(90deg, #a9c0de, #7f94b3 48px);
`;

const TrayItem = styled(BareButton)<{ $w: number }>`
  width: ${(p) => p.$w}px;
  height: 24px;
  margin-bottom: 5px;
`;

const SysItem = styled(TrayItem)`
  margin-bottom: 0;
`;

const Clock = styled.time`
  align-self: flex-end;
  width: 19px;
  margin-left: 11px;
  padding-bottom: 2px;
  overflow: hidden;
  color: #fff;
  font-size: 15px;
  line-height: 20px;
`;

const TrayGlyph = styled.text`
  font-weight: 700;
  stroke: #222;
  stroke-width: 2px;
  paint-order: stroke;
  fill: #fff;
`;

const PlainGlyph = styled.text`
  font-weight: 700;
  fill: #fff;
  stroke: none;
`;

const Task = () => (
  <TaskBar>
    <TaskButton $w={59} $gap={2} aria-label="Chrome">
      <Icon w={50} h={38} stroke="none">
        <g transform="translate(20 19)">
          <circle r="18" fill="#fbcb43" />
          <path d="M-15.600 -9A18 18 0 0 1 15.600 -9H0L-8 4Z" fill="#d9443a" />
          <path d="M-15.600 -9A18 18 0 0 0 0 18L8 4.500 0 0Z" fill="#26a04f" />
          <circle r="8.500" fill="#fff" />
          <circle r="6.800" fill="#3f7fe8" />
        </g>
      </Icon>
    </TaskButton>
    <TaskButton $w={68} $gap={2} aria-label="录屏">
      <Icon w={40} h={40} stroke="#fff" sw={2}>
        <rect width="40" height="40" rx="9" fill="#141c2e" stroke="none" />
        <rect x="6" y="10" width="20" height="20" rx="4" />
        <path d="M28 17 34 13.500V26.500L28 23" strokeLinejoin="round" />
        <circle cx="20" cy="16" r="1.800" fill="#f2a93b" stroke="none" />
      </Icon>
    </TaskButton>
    <TaskButton $w={68} $active aria-label="Excel">
      <Icon w={40} h={36} stroke="none">
        <path d="M9 0H24V9H9Z" fill="#21a366" />
        <path d="M24 0H39V9H24Z" fill="#33c481" />
        <path d="M9 9H24V18H9Z" fill="#107c41" />
        <path d="M24 9H39V18H24Z" fill="#21a366" />
        <path d="M9 18H24V27H9Z" fill="#185c37" />
        <path d="M24 18H39V27H24Z" fill="#107c41" />
        <path d="M9 27H39V36H9Z" fill="#185c37" />
        <rect x="0" y="8" width="20" height="20" rx="1" fill="#107c41" />
        <PlainGlyph x="10" y="24" textAnchor="middle" fontSize="16">X</PlainGlyph>
      </Icon>
    </TaskButton>
    <Tray>
      <TrayItem $w={24} aria-label="输入法">
        <Icon w={18} h={18} stroke="none">
          <rect x="0" y="1" width="17" height="17" rx="4" fill="#3fae3a" transform="rotate(-8 9 9)" />
          <PlainGlyph x="9" y="15" textAnchor="middle" fontSize="17">S</PlainGlyph>
        </Icon>
      </TrayItem>
      <TrayItem $w={24} aria-label="英文">
        <Icon w={18} h={18}><TrayGlyph x="9" y="17" textAnchor="middle" fontSize="22">A</TrayGlyph></Icon>
      </TrayItem>
      <TrayItem $w={24} aria-label="半角">
        <Icon w={18} h={18} stroke="#222" sw={1.2}>
          <path d="M11 1C18 4 19 12 12 16C7 18 2 15 1 11C7 13 11 9 11 1Z" fill="#fff" />
        </Icon>
      </TrayItem>
      <TrayItem $w={24} aria-label="标点">
        <Icon w={18} h={18} stroke="#222" sw={1.2}>
          <circle cx="5" cy="5" r="3.800" fill="#fff" />
          <path d="M11 9.500C13 7.500 17 8.500 16.500 12C16 15 14 16.500 11.500 17V15C13 14.500 13.500 13.500 13 12.500C11 12.500 10.500 11 11 9.500Z" fill="#fff" />
        </Icon>
      </TrayItem>
      <TrayItem $w={24} aria-label="软键盘">
        <Icon w={19} h={17} stroke="#222" sw={1.5}>
          <path d="M1 1H18V16H1Z" fill="#f4f4f4" />
          <path d="M3.500 4.500H15.500M3.500 8H12M14 8H16M3.500 12H16" />
        </Icon>
      </TrayItem>
      <TrayItem $w={24} aria-label="皮肤">
        <Icon w={18} h={20} stroke="#222" sw={1.2}>
          <path d="M2 8 5 5H11L14 8V16H11V19H5V16H2Z" fill="#c9c9c9" />
          <path d="M5.500 1H10.500V6H5.500Z" fill="#fff" />
          <path d="M13 17C16 18 17 15 17 13" strokeWidth={2} />
        </Icon>
      </TrayItem>
      <TrayItem $w={26} aria-label="设置">
        <Icon w={20} h={20} stroke="#222" sw={1.2}>
          <path d="M14 1C10 1 8 4 9.500 7.500L1 14.500C0 18 3 20 5 18.500L12.500 11.500C16 12 19.500 9 18.500 5.500L14.500 8.500 11.500 6Z" fill="#fff" />
        </Icon>
      </TrayItem>
      <TrayItem $w={26} aria-label="帮助">
        <Icon w={18} h={18} stroke="#eee" sw={1}>
          <circle cx="9" cy="9" r="8.300" fill="#1b2fa8" />
          <PlainGlyph x="9" y="14" textAnchor="middle" fontSize="14">?</PlainGlyph>
        </Icon>
      </TrayItem>
      <TrayItem $w={20} aria-label="输入法选项">
        <Icon w={9} h={18} stroke="#fff" sw={1.2}>
          <path d="M3 1H8V5H3ZM3 3H1V7H6V5" />
          <path d="M2 15H7L4.500 18Z" fill="#fff" stroke="none" />
        </Icon>
      </TrayItem>
      <SysItem $w={28} aria-label="显示隐藏的图标">
        <Icon w={10} h={5} stroke="none"><path d="M0 5H10L5 0Z" fill="#fff" /></Icon>
      </SysItem>
      <SysItem $w={36} aria-label="电源">
        <Icon w={12} h={20} stroke="#fff" sw={1.5}>
          <path d="M4 1H8V3H11V19H1V3H4Z" fill="#333f52" />
          <path d="M2.500 12H9.500V17.500H2.500Z" fill="#fff" stroke="none" />
        </Icon>
      </SysItem>
      <SysItem $w={26} aria-label="网络">
        <Icon w={20} h={19} stroke="#fff" sw={1.5}>
          <path d="M7 5H19V14H7Z" fill="#46566f" />
          <path d="M13 14V17.500M9 17.500H17M1 2H6V8H1ZM2 2V0M5 2V0M3.500 8V15H7" />
        </Icon>
      </SysItem>
      <SysItem $w={34} aria-label="音量">
        <Icon w={20} h={20} stroke="#fff" sw={1.3}>
          <path d="M1 7H4L10 1.500V18.500L4 13H1Z" fill="#dfe6ef" />
          <path d="M12.500 7C14 9 14 11 12.500 13M15 5C17.500 8 17.500 12 15 15M17.500 3.500C21 8 21 12 17.500 16.500" />
        </Icon>
      </SysItem>
      <Clock>20</Clock>
    </Tray>
  </TaskBar>
);

export default function App() {
  return (
    <Window>
      <GlobalStyle />
      <TitleArea />
      <Tabs />
      <RibbonBar>
        <ClipGroup />
        <FontGroup />
        <AlignGroup />
        <NumberGroup />
        <StyleGroup />
        <CellGroup />
        <EditGroup />
        <IdeaGroup />
        <CameraGroup />
      </RibbonBar>
      <Formula />
      <Sheet />
      <SheetStrip />
      <Status />
      <Task />
    </Window>
  );
}
